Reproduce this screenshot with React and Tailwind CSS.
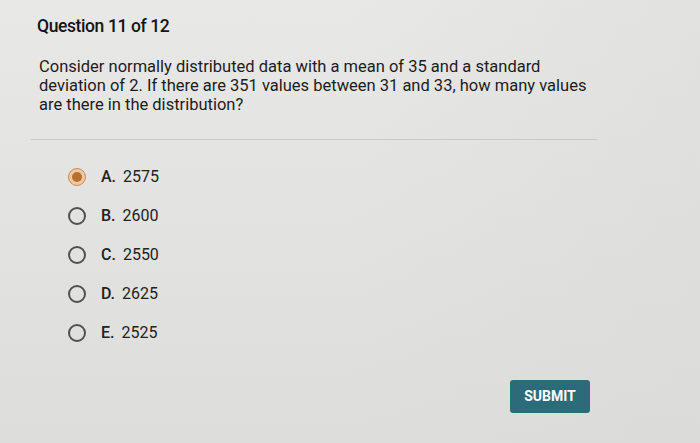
import React from "react";

const options = [
  { k: "A.", v: "2575", selected: true },
  { k: "B.", v: "2600" },
  { k: "C.", v: "2550" },
  { k: "D.", v: "2625" },
  { k: "E.", v: "2525" },
];

export default function App() {
  return (
    <div className="w-[700px] h-[443px] overflow-hidden bg-gradient-to-b from-[#e8e8e6] to-[#dddddb]">
      <div
        className="w-full h-full bg-gradient-to-r from-transparent via-transparent to-[#d8d8d8]/40 text-[#1c1c1c]"
        style={{ fontFamily: "Roboto, 'Liberation Sans', sans-serif" }}
      >
        <div className="pt-[15px] pl-[37px]">
          <h1 className="text-[17.5px] leading-[23px] font-medium tracking-[-0.4px] text-[#141414]">Question 11 of 12</h1>
          <p className="mt-[19px] ml-[2px] w-[552px] text-[16.5px] leading-[19px]">
            Consider normally distributed data with a mean of 35 and a standard deviation of 2. If there are 351 values between 31 and 33, how many values are there in the distribution?
          </p>
          <div className="mt-[25px] ml-[-6px] w-[566px] h-px bg-[#c9c9c7]" />
          <div className="mt-[27px] ml-[31px] flex flex-col gap-[19px]">
            {options.map((o) => (
              <div key={o.k} className="flex items-center h-[20px]">
                {o.selected ? (
                  <span className="w-[18px] h-[18px] rounded-full bg-[#f0c9a4] border border-[#c98a55] flex items-center justify-center">
                    <span className="w-[10px] h-[10px] rounded-full bg-[#b5702f]" />
                  </span>
                ) : (
                  <span className="w-[18px] h-[18px] rounded-full border-2 border-[#505050]" />
                )}
                <span className="ml-[15px] text-[16px] font-medium text-[#222]">{o.k}</span>
                <span className="ml-[7px] text-[16px] text-[#222]">{o.v}</span>
              </div>
            ))}
          </div>
          <div className="mt-[37px] ml-[473px]">
            <button className="w-[80px] h-[33px] rounded-[3px] bg-[#2b6b7a] text-white text-[14px] font-bold">
              SUBMIT
            </button>
          </div>
        </div>
      </div>
    </div>
  );
}
